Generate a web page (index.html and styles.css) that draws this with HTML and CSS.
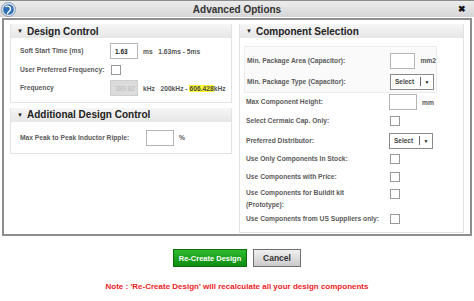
FILE: index.html
```html
<!DOCTYPE html>
<html lang="en">
<head>
    <meta charset="UTF-8">
    <meta name="viewport" content="width=device-width, initial-scale=1.0">
    <title>Advanced Options</title>
    <link rel="stylesheet" href="styles.css">
</head>
<body>
    <div class="dialog">
        <div class="titlebar">
            <svg class="app-icon" width="15" height="15" viewBox="0 0 15 15">
                <circle cx="7.5" cy="7.5" r="7" fill="#dfe6ee" stroke="#8a9bb0" stroke-width="1"/>
                <circle cx="7.5" cy="7.5" r="5.3" fill="#2f6fb8"/>
                <path d="M5 4.5 C7.5 3.5 10 5 9.5 7.5 C9 9.5 7 10 6.5 11.5" fill="none" stroke="#fff" stroke-width="1.4" stroke-linecap="round"/>
            </svg>
            <div class="title">Advanced Options</div>
            <div class="close">&#x2716;</div>
        </div>

        <div class="content">
            <!-- left column -->
            <div class="column left-column">
                <div class="panel">
                    <div class="panel-header"><span class="arrow">&#9660;</span>Design Control</div>
                    <div class="panel-body">
                        <div class="row">
                            <span class="label label-wide">Soft Start Time (ms)</span>
                            <span class="text-input"><b>1.63</b></span>
                            <span class="unit">ms&nbsp;&nbsp;&nbsp;1.63ms - 5ms</span>
                        </div>
                        <div class="row">
                            <span class="label label-wide">User Preferred Frequency:</span>
                            <span class="checkbox"></span>
                        </div>
                        <div class="row">
                            <span class="label label-wide">Frequency</span>
                            <span class="text-input disabled">389.82</span>
                            <span class="unit">kHz&nbsp;&nbsp;&nbsp;200kHz - <span class="highlight">606.428</span>kHz</span>
                        </div>
                    </div>
                </div>

                <div class="panel">
                    <div class="panel-header"><span class="arrow">&#9660;</span>Additional Design Control</div>
                    <div class="panel-body panel-body-ripple">
                        <div class="row">
                            <span class="label label-ripple">Max Peak to Peak Inductor Ripple:</span>
                            <span class="text-input"></span>
                            <span class="unit">%</span>
                        </div>
                    </div>
                </div>
            </div>

            <!-- right column -->
            <div class="column right-column">
                <div class="panel panel-full">
                    <div class="panel-header"><span class="arrow">&#9660;</span>Component Selection</div>
                    <div class="panel-body">
                        <div class="sub-box">
                            <div class="row row-box">
                                <span class="label label-comp">Min. Package Area (Capacitor):</span>
                                <span class="text-input"></span>
                                <span class="unit">mm2</span>
                            </div>
                            <div class="row row-box">
                                <span class="label label-comp">Min. Package Type (Capacitor):</span>
                                <span class="select">Select<span class="select-arrow">&#9660;</span></span>
                            </div>
                        </div>
                        <div class="row row-18">
                            <span class="label label-comp">Max Component Height:</span>
                            <span class="text-input"></span>
                            <span class="unit">mm</span>
                        </div>
                        <div class="row row-20">
                            <span class="label label-comp">Select Cermaic Cap. Only:</span>
                            <span class="checkbox"></span>
                        </div>
                        <div class="row row-19">
                            <span class="label label-comp">Preferred Distributor:</span>
                            <span class="select">Select<span class="select-arrow">&#9660;</span></span>
                        </div>
                        <div class="row row-18">
                            <span class="label label-comp">Use Only Components In Stock:</span>
                            <span class="checkbox"></span>
                        </div>
                        <div class="row row-18">
                            <span class="label label-comp">Use Components with Price:</span>
                            <span class="checkbox"></span>
                        </div>
                        <div class="row row-double">
                            <span class="label label-comp">Use Components for Buildit kit<br>(Prototype):</span>
                            <span class="checkbox"></span>
                        </div>
                        <div class="row row-last">
                            <span class="label label-comp">Use Components from US Suppliers only:</span>
                            <span class="checkbox"></span>
                        </div>
                    </div>
                </div>
            </div>
        </div>

        <div class="actions">
            <button class="btn btn-green">Re-Create Design</button>
            <button class="btn btn-gray">Cancel</button>
        </div>

        <p class="note">Note : 'Re-Create Design' will recalculate all your design components</p>
    </div>
</body>
</html>
```

FILE: styles.css
```css
body {
    margin: 0;
    font-family: 'Liberation Sans', Arial, sans-serif;
    background-color: #fff;
    color: #5a5a5a;
}
.dialog {
    width: 474px;
    height: 301px;
    overflow: hidden;
}
.titlebar {
    height: 17px;
    box-sizing: border-box;
    border-top: 1px solid #8c8c8c;
    background: linear-gradient(#ececec, #d6d6d6);
    display: flex;
    align-items: center;
    padding: 0 8px 0 1px;
}
.app-icon {
    flex: none;
}
.title {
    flex: 1;
    text-align: center;
    font-size: 10px;
    font-weight: bold;
    color: #333;
}
.close {
    font-size: 9px;
    color: #111;
    font-weight: bold;
}
.content {
    margin: 1px 2px 0 2px;
    height: 209px;
    border: 2px solid #8e8e8e;
    display: flex;
    gap: 7px;
    padding: 4px 6px 1px 6px;
}
.column {
    display: flex;
    flex-direction: column;
    gap: 5px;
}
.left-column {
    width: 222px;
}
.right-column {
    width: 225px;
}
.panel {
    border: 1px solid #e2e2e2;
    border-top: none;
}
.panel-full {
    flex: 1;
}
.panel-header {
    height: 14px;
    background: linear-gradient(#f6f6f6, #e6e6e6);
    font-size: 10px;
    font-weight: bold;
    color: #222;
    display: flex;
    align-items: center;
    padding-left: 6px;
}
.arrow {
    font-size: 6px;
    margin-right: 4px;
}
.panel-body {
    padding: 4px 0 4px 9px;
}
.panel-body-ripple {
    padding: 7px 0 6px 9px;
}
.right-column .panel-body {
    padding: 8px 0 0 6px;
}
.row {
    display: flex;
    align-items: center;
    height: 18.5px;
    font-size: 6.7px;
    font-weight: bold;
}
.row-box {
    height: 21px;
}
.row-18 {
    height: 18px;
}
.row-19 {
    height: 19px;
}
.row-20 {
    height: 20px;
}
.row-double {
    height: 26px;
}
.row-double .checkbox {
    align-self: flex-start;
    margin-top: 3px;
}
.row-last {
    height: 13px;
}
.label {
    flex: none;
    line-height: 12px;
}
.label-wide {
    width: 90px;
}
.label-ripple {
    width: 126px;
}
.label-comp {
    width: 143px;
}
.sub-box {
    width: 193px;
    margin-left: -2px;
    padding: 3px 0 0 2px;
    background-color: #fafafa;
    border: 1px solid #ececec;
    box-sizing: border-box;
}
.text-input {
    width: 28px;
    height: 16px;
    box-sizing: border-box;
    border: 1px solid #b5b5b5;
    background: #fff;
    font-size: 6.5px;
    color: #222;
    display: flex;
    align-items: center;
    padding-left: 4px;
}
.text-input.disabled {
    background: #dcdcdc;
    border-color: #cfcfcf;
    color: #bcbcbc;
    font-weight: normal;
}
.unit {
    margin-left: 5px;
    color: #555;
}
.highlight {
    background-color: #ffff33;
    color: #444;
}
.checkbox {
    width: 10px;
    height: 10px;
    box-sizing: border-box;
    border: 1px solid #9a9a9a;
    background: #fff;
    margin-left: 1px;
}
.select {
    width: 44px;
    height: 16px;
    box-sizing: border-box;
    border: 1px solid #8a8a8a;
    background: #fff;
    display: flex;
    align-items: center;
    padding-left: 4px;
    font-size: 6.5px;
    color: #444;
}
.select-arrow {
    margin-left: auto;
    width: 12px;
    border-left: 1px solid #666;
    height: 9px;
    display: flex;
    align-items: center;
    justify-content: center;
    font-size: 5px;
    color: #222;
}
.actions {
    display: flex;
    justify-content: center;
    gap: 6px;
    margin-top: 13px;
}
.btn {
    font-family: 'Liberation Sans', Arial, sans-serif;
    font-weight: bold;
    height: 18px;
    padding: 0 4px;
    cursor: pointer;
}
.btn-green {
    width: 74px;
    font-size: 7.5px;
    color: #fff;
    background: linear-gradient(#2fba2f, #0f8d12);
    border: 1px solid #0b6d0b;
}
.btn-gray {
    width: 48px;
    font-size: 8.5px;
    color: #333;
    background: linear-gradient(#f0f0f0, #cacaca);
    border: 1px solid #6f6f6f;
}
.note {
    margin: 15px 0 0 0;
    text-align: center;
    font-size: 8px;
    font-weight: bold;
    color: #ee1c25;
}
```
